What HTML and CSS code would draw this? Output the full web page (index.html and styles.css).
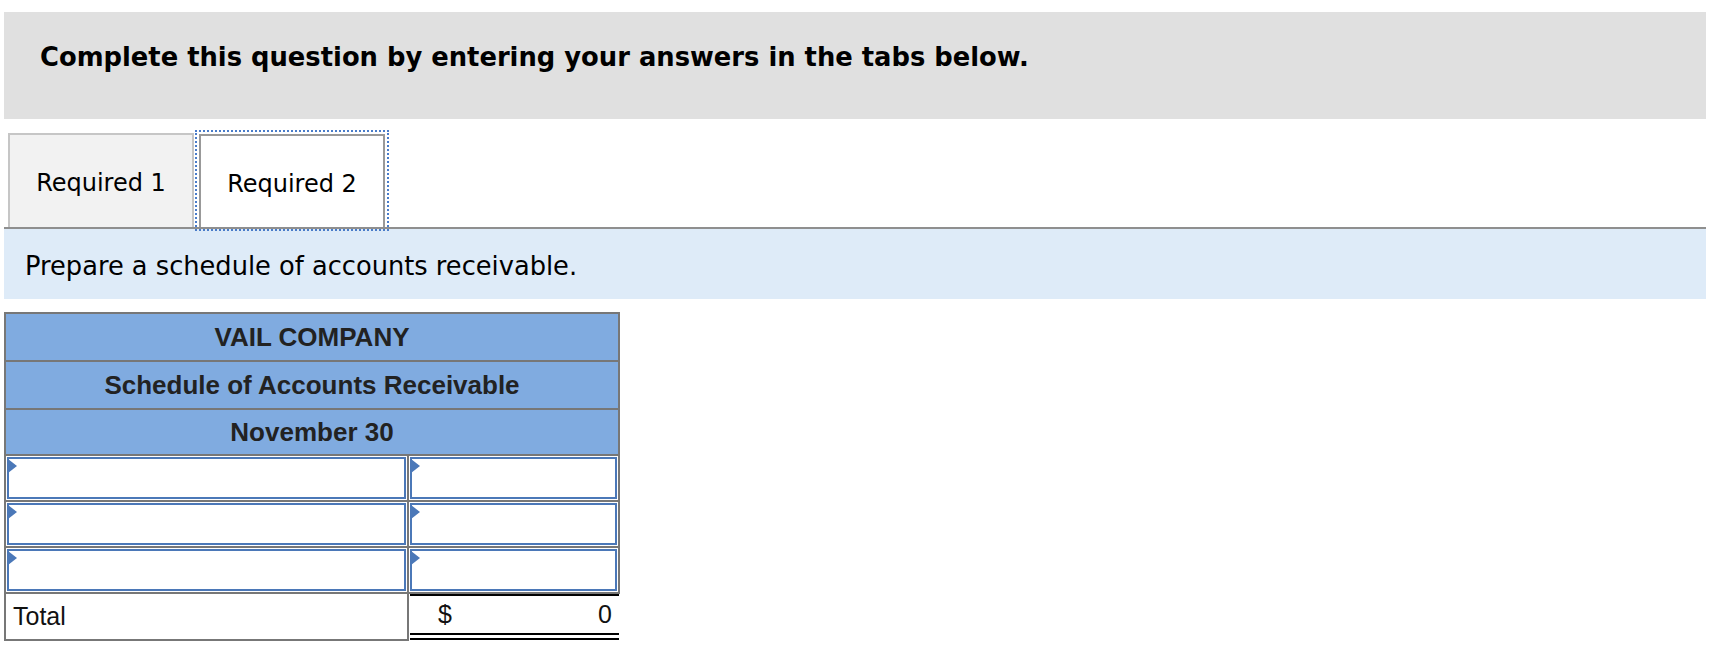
FILE: index.html
```html
<!DOCTYPE html>
<html>
<head>
<meta charset="utf-8">
<link rel="stylesheet" href="styles.css">
</head>
<body>
<div class="wrap">
  <div class="banner">Complete this question by entering your answers in the tabs below.</div>
  <div class="tabs">
    <div class="tab">Required 1</div>
    <div class="tab active">Required 2</div>
  </div>
  <div class="prompt">Prepare a schedule of accounts receivable.</div>
  <table class="sched">
    <colgroup><col class="k1"><col class="k2"></colgroup>
    <tr class="title"><td colspan="2">VAIL COMPANY</td></tr>
    <tr class="title"><td colspan="2">Schedule of Accounts Receivable</td></tr>
    <tr class="title last"><td colspan="2">November 30</td></tr>
    <tr class="entry"><td class="c1"><div class="inp"></div></td><td class="c2"><div class="inp"></div></td></tr>
    <tr class="entry"><td class="c1"><div class="inp"></div></td><td class="c2"><div class="inp"></div></td></tr>
    <tr class="entry"><td class="c1"><div class="inp"></div></td><td class="c2"><div class="inp"></div></td></tr>
    <tr class="total"><td class="c1 lbl">Total</td><td class="c2 amt"><div class="tot"><span>$</span><span>0</span></div></td></tr>
  </table>
</div>
</body>
</html>
```
FILE: styles.css
```css
html, body { margin: 0; padding: 0; background: #fff; }
.wrap { padding: 12px 8px 0 4px; }
.banner {
  box-sizing: border-box;
  height: 107px;
  background: #e0e0e0;
  padding: 30px 0 0 36px;
  line-height: 30px;
  font-family: "DejaVu Sans", Verdana, sans-serif;
  font-weight: bold;
  font-size: 25.8px;
  color: #000;
}
.tabs {
  display: flex;
  align-items: flex-end;
  gap: 3px;
  margin-top: 14px;
  padding-left: 4px;
  border-bottom: 2px solid #8f8f8f;
  height: 94px;
}
.tab {
  box-sizing: border-box;
  width: 186px;
  height: 94px;
  display: flex;
  align-items: center;
  justify-content: center;
  padding-top: 4px;
  background: #f2f2f2;
  border: 2px solid #c6c6c6;
  border-bottom: none;
  font-family: "DejaVu Sans", Verdana, sans-serif;
  font-size: 24px;
  color: #000;
}
.tab.active {
  background: #fff;
  width: 186px;
  height: 93px;
  border: 2px solid #999;
  border-bottom: none;
  outline: 2px dotted #4a7cc9;
  outline-offset: 2px;
  margin-left: 2px;
}
.prompt {
  height: 70px;
  background: #deebf8;
  display: flex;
  align-items: center;
  padding: 3px 0 0 21px;
  box-sizing: border-box;
  font-family: "DejaVu Sans", Verdana, sans-serif;
  font-size: 25.7px;
  color: #000;
}
.sched {
  margin-top: 13px;
  border-collapse: collapse;
  table-layout: fixed;
  width: 614px;
  font-family: "Liberation Sans", Arial, sans-serif;
  color: #222;
}
.k1 { width: 403px; }
.k2 { width: 211px; }
.sched td { border: 2px solid #777; padding: 0; }
.title td {
  background: #80abe0;
  text-align: center;
  font-weight: bold;
  font-size: 26px;
  height: 46px;
}
.title.last td { height: 44px; }
.entry td { padding: 1px; }
.inp {
  position: relative;
  box-sizing: border-box;
  height: 42px;
  border: 2px solid #4b78b8;
  background: #fff;
}
.inp::before {
  content: "";
  position: absolute;
  left: -1px;
  top: 0;
  border-left: 9px solid #4b78b8;
  border-top: 7px solid transparent;
  border-bottom: 7px solid transparent;
}
.total td { height: 44px; font-size: 25px; }
.lbl { padding-left: 7px !important; color: #111; }
.amt { padding: 0 !important; border-right: none !important; border-bottom: none !important; }
.tot {
  display: flex;
  justify-content: space-between;
  align-items: center;
  box-sizing: border-box;
  height: 46px;
  margin-left: 1px;
  padding: 0 7px 0 28px;
  border-top: 2px solid #000;
  border-bottom: 7px double #000;
  color: #111;
}
```
